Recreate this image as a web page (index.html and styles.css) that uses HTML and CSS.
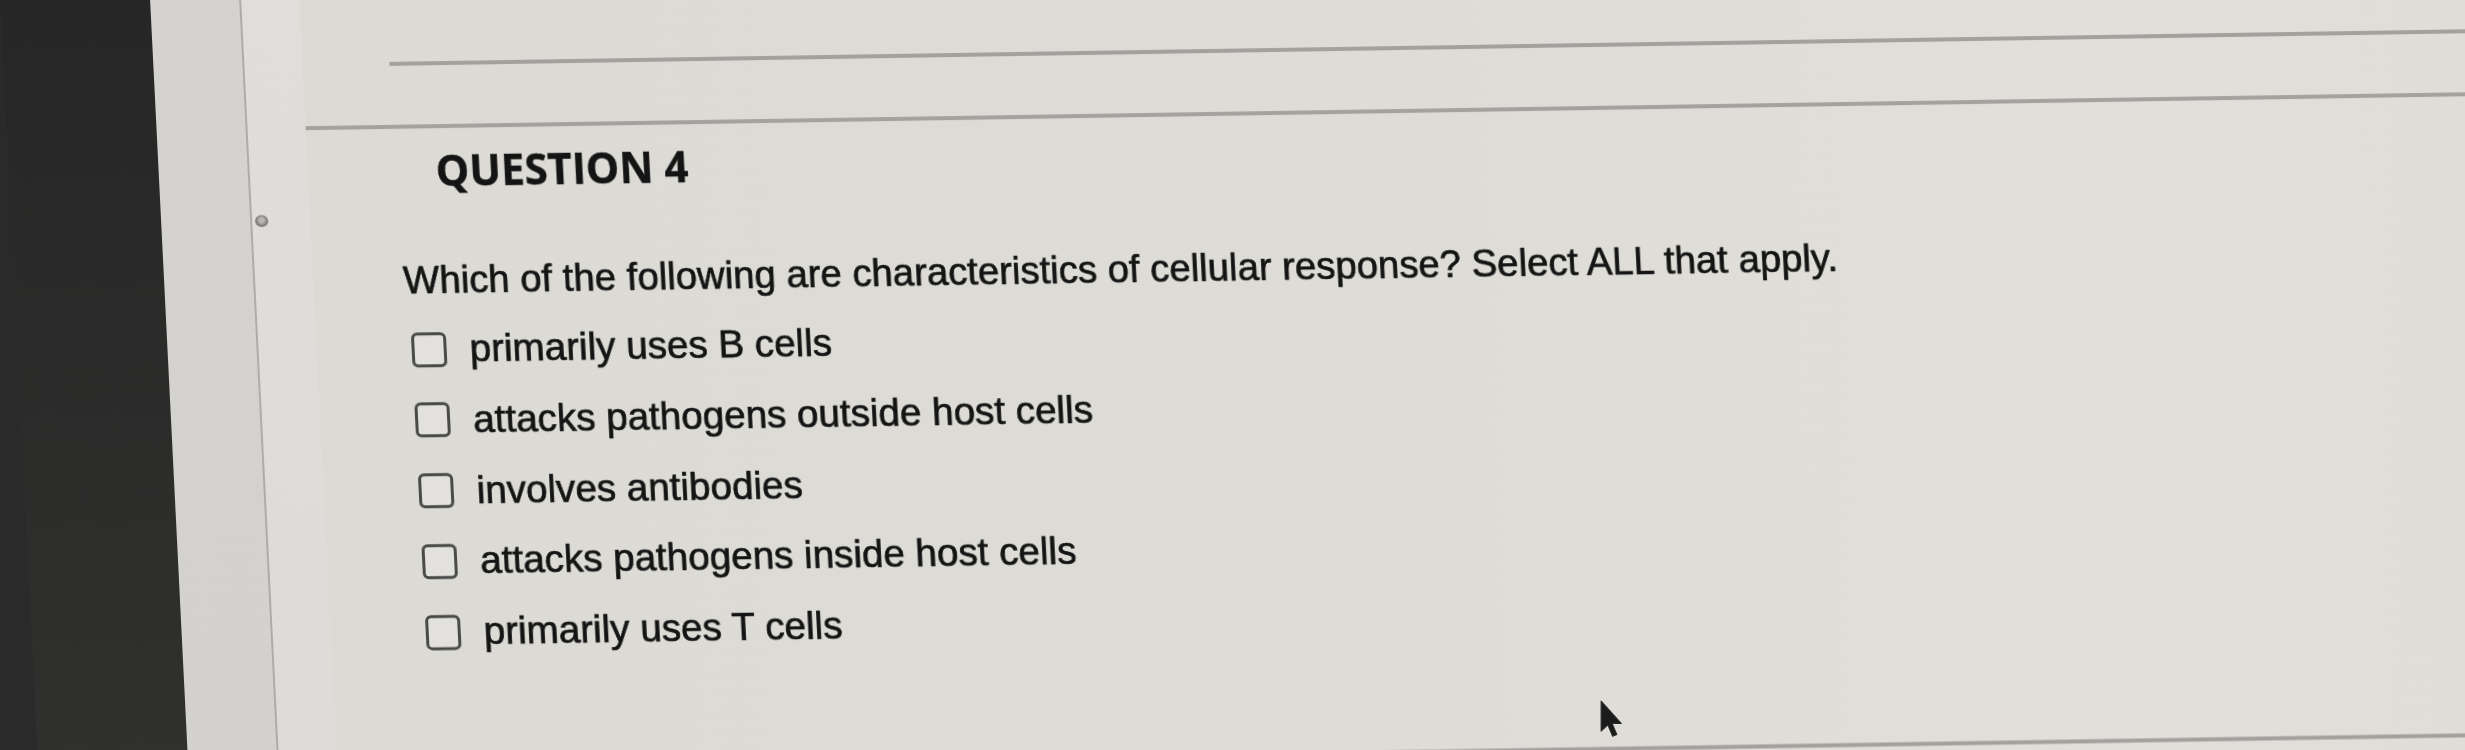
FILE: index.html
```html
<!DOCTYPE html>
<html lang="en">
<head>
<meta charset="utf-8">
<title>Question 4</title>
<link rel="stylesheet" href="styles.css">
</head>
<body>
  <div class="screen">
    <div class="rail"></div>
    <nav class="sidebar"></nav>
    <div class="gutter"></div>
    <main class="content">
      <div class="rule rule-top"></div>
      <section class="question">
        <h2 class="q-title">QUESTION 4</h2>
        <p class="q-prompt">Which of the following are characteristics of cellular response? Select ALL that apply.</p>
        <ul class="options">
          <li class="option"><span class="box"></span><span class="label">primarily uses B cells</span></li>
          <li class="option"><span class="box"></span><span class="label">attacks pathogens outside host cells</span></li>
          <li class="option"><span class="box"></span><span class="label">involves antibodies</span></li>
          <li class="option"><span class="box"></span><span class="label">attacks pathogens inside host cells</span></li>
          <li class="option"><span class="box"></span><span class="label">primarily uses T cells</span></li>
        </ul>
      </section>
      <div class="rule rule-bottom"></div>
    </main>
    <span class="handle"></span>
  </div>
  <svg class="cursor" viewBox="0 0 20 33" width="23" height="38" aria-hidden="true">
    <path d="M1 1 L1 27 L6.8 21.6 L11 31.5 L14.6 30 L10.5 20.4 L18.4 20.4 Z" fill="#1b1b1b" stroke="#2a2a2a" stroke-width="1" stroke-linejoin="round"/>
  </svg>
</body>
</html>
```
FILE: styles.css
```css
html, body {
  margin: 0;
  padding: 0;
}

body {
  width: 2465px;
  height: 750px;
  overflow: hidden;
  background: #2a2a2a;
  position: relative;
}

.screen {
  width: 2720px;
  height: 920px;
  display: grid;
  grid-template-columns: 150px 91px 58px 1fr;
  transform-origin: 0 0;
  transform: rotate(-0.9deg) skewX(1.95deg);
  position: relative;
  filter: blur(0.45px);
}

.rail {
  background: linear-gradient(180deg, #262626 0%, #2d2d2c 60%, #323231 100%);
}

.sidebar {
  box-sizing: border-box;
  background: linear-gradient(180deg, #d4d3cf 0%, #d2d1cd 100%);
  border-right: 2px solid #aeacaa;
}

.gutter {
  background: linear-gradient(180deg, #dfdeda 0%, #dcdbd7 100%);
}

.content {
  display: flex;
  flex-direction: column;
  padding-top: 68px;
  background: linear-gradient(90deg, #dbdad5 0%, #dddcd7 45%, #e0dfda 75%, #dedcd7 100%);
}

.rule {
  height: 4px;
  background: #a3a19e;
}

.rule-top {
  margin-left: 87px;
}

.rule-bottom {
  margin-top: auto;
  margin-bottom: 144px;
}

.question {
  margin-top: 59px;
  border-top: 4px solid #a4a29f;
  padding: 21px 0 0 90px;
  color: #161616;
}

.q-title {
  margin: 0;
  padding-left: 38px;
  font-family: "Open Sans", "Liberation Sans", sans-serif;
  font-weight: 700;
  font-size: 42px;
  line-height: 42px;
  color: #141414;
  -webkit-text-stroke: 0.4px #141414;
}

.q-prompt {
  margin: 70px 0 0 0;
  font-family: "Liberation Sans", Arial, sans-serif;
  font-size: 38.3px;
  line-height: 38px;
  color: #141414;
  -webkit-text-stroke: 0.7px #141414;
  white-space: nowrap;
}

.options {
  list-style: none;
  margin: 28px 0 0 0;
  padding: 0 0 0 5px;
  display: flex;
  flex-direction: column;
  gap: 26.75px;
}

.option {
  height: 44px;
  display: flex;
  align-items: center;
  gap: 23px;
}

.box {
  box-sizing: border-box;
  width: 35px;
  height: 35px;
  border: 3px solid #4a4a49;
  border-radius: 6px;
  background: #e2e1dd;
  flex: none;
}

.label {
  font-family: "Liberation Sans", Arial, sans-serif;
  font-size: 38.6px;
  line-height: 44px;
  color: #141414;
  -webkit-text-stroke: 0.7px #141414;
  white-space: nowrap;
}

.handle {
  position: absolute;
  left: 244px;
  top: 219px;
  width: 13px;
  height: 12px;
  border-radius: 50%;
  background: radial-gradient(circle at 50% 45%, #b9b7b3 0 25%, #7d7b79 60%, #8f8d8a 100%);
}

.cursor {
  position: absolute;
  left: 1600px;
  top: 700px;
}
```
